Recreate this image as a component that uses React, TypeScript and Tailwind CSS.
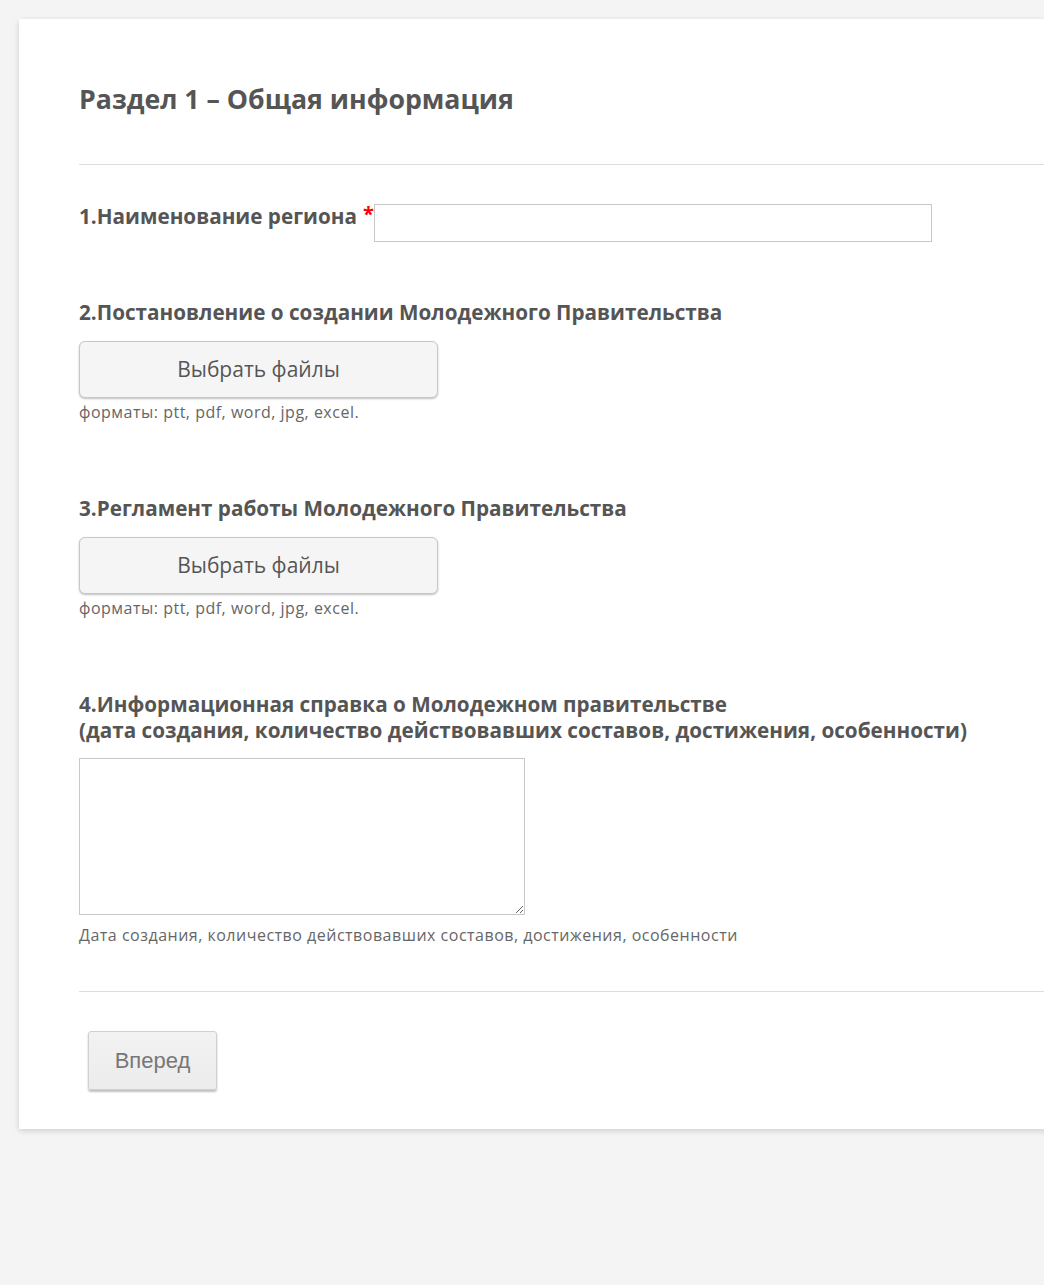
import React from 'react';

const font = { fontFamily: '"Open Sans", "DejaVu Sans", sans-serif' };

const FileField: React.FC<{ label: string }> = ({ label }) => (
  <div>
    <div className="text-[20.7px] font-bold text-[#555] leading-[26px]">{label}</div>
    <button className="mt-[16px] w-[359px] h-[57px] rounded-[6px] border border-[#c8c8c8] bg-[#f5f5f5] shadow-[0_1px_2px_rgba(0,0,0,0.25)] text-[21px] text-[#555]">
      Выбрать файлы
    </button>
    <div className="mt-[3px] text-[16px] tracking-[0.5px] text-[#666] leading-[22px]">форматы: ptt, pdf, word, jpg, excel.</div>
  </div>
);

export default function App() {
  return (
    <div className="min-h-[1285px] w-full overflow-hidden bg-[#f4f4f4] pt-[19px]" style={font}>
      <div className="ml-[19px] w-[1080px] bg-white shadow-[0_2px_6px_rgba(0,0,0,0.15)] pl-[60px] pt-[62px] pb-[39px]">
        <h1 className="text-[26.7px] font-bold text-[#555] leading-[36px]">Раздел 1 – Общая информация</h1>
        <div className="mt-[47px] border-t border-[#ddd]" />

        <div className="mt-[39px] flex items-start">
          <span className="text-[20.7px] font-bold text-[#555] leading-[26px] mt-[-1px]">1.Наименование региона</span>
          <span className="ml-[6px] text-[20px] font-bold text-[#f00] leading-[20px]">*</span>
          <input className="w-[558px] h-[38px] border border-[#c8c8c8] bg-white outline-none" />
        </div>

        <div className="mt-[57px]">
          <FileField label="2.Постановление о создании Молодежного Правительства" />
        </div>
        <div className="mt-[72px]">
          <FileField label="3.Регламент работы Молодежного Правительства" />
        </div>

        <div className="mt-[72px]">
          <div className="text-[20.7px] font-bold text-[#555] leading-[26px]">
            4.Информационная справка о Молодежном правительстве
            <br />
            (дата создания, количество действовавших составов, достижения, особенности)
          </div>
          <textarea className="block mt-[15px] w-[446px] h-[157px] border border-[#c8c8c8] bg-white outline-none" />
          <div className="mt-[9px] text-[16px] tracking-[0.5px] text-[#666] leading-[22px]">
            Дата создания, количество действовавших составов, достижения, особенности
          </div>
        </div>

        <div className="mt-[45px] border-t border-[#ddd]" />

        <button
          className="mt-[39px] ml-[9px] w-[129px] h-[59px] rounded-[3px] border border-[#d0d0d0] bg-gradient-to-b from-[#f2f2f2] to-[#ececec] shadow-[0_2px_2px_rgba(0,0,0,0.25)] text-[22px] text-[#777]"
          style={{ fontFamily: '"Liberation Sans", Arial, sans-serif' }}
        >
          Вперед
        </button>
      </div>
    </div>
  );
}
